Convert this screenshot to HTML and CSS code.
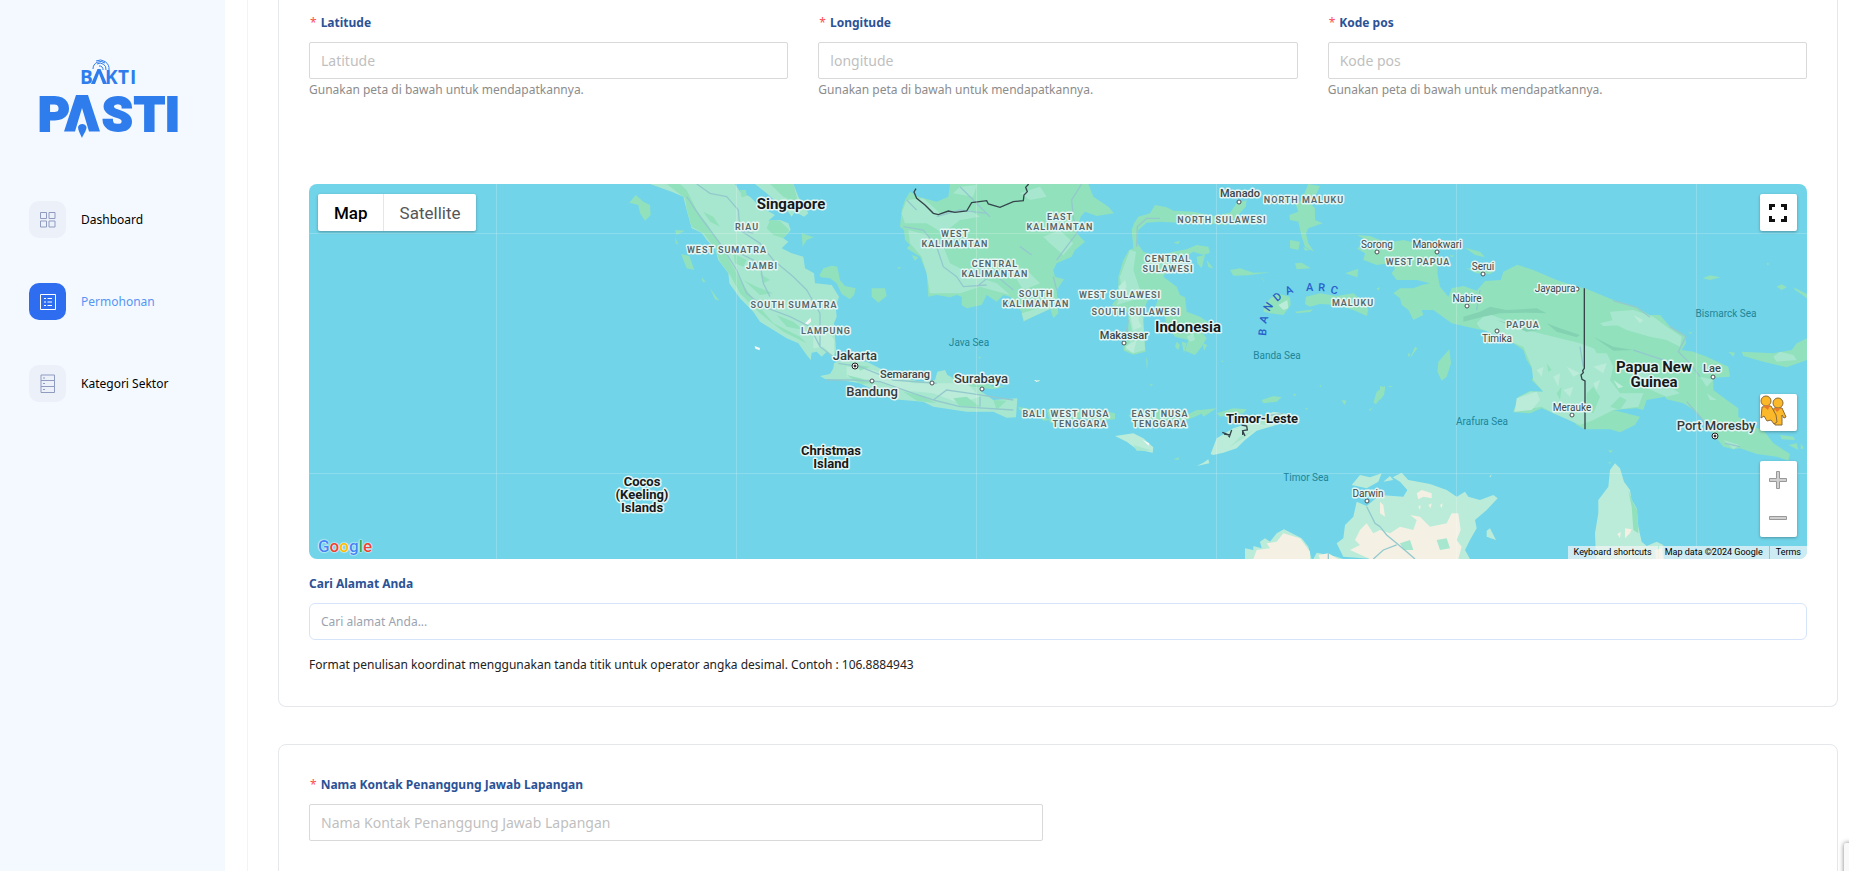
FILE: index.html
```html
<!DOCTYPE html>
<html lang="id">
<head>
<meta charset="utf-8">
<title>BAKTI PASTI - Permohonan</title>
<link rel="stylesheet" href="styles.css">
</head>
<body>
<div class="shell">
  <aside class="sidebar">
    <svg class="logo" viewBox="0 0 140 84" role="img" aria-label="BAKTI PASTI">
      <g class="logo-signal">
        <path d="M54 15a7.500 7.500 0 0 1 12-6"/>
        <path d="M57 7a9 9 0 0 1 13 9"/>
        <path d="M58 10a6 6 0 0 1 9 6"/>
        <path d="M60 12a3.500 3.500 0 0 1 4 4"/>
      </g>
      <text class="logo-small" x="41 66 79 91" y="30">BKTI</text>
      <path class="logo-fill" d="M52 30 58.500 15H61.500L68 30H64L60 19.500 56 30Z"/>
      <text class="logo-big" x="-1 63 95 126" y="77">PSTI</text>
      <path class="logo-fill" d="M25 77.500 37 41H49L61 77.500H50L43 54 36 77.500Z"/>
      <path class="logo-fill" d="M39 73a4.500 4.500 0 0 1 8.500 0c0 4-3 7-4.500 11-1.500-4-4-7-4-11Z"/>
    </svg>
    <nav class="nav">
      <a class="nav-item" href="#dashboard">
        <span class="nav-icon">
          <svg viewBox="0 0 18 18"><path d="M1.500 1.500h6v6h-6zM10 1.500h6v6h-6zM1.500 10h6v6h-6zM10 10h6v6h-6z"/></svg>
        </span>
        Dashboard
      </a>
      <a class="nav-item nav-item-active" href="#permohonan">
        <span class="nav-icon">
          <svg viewBox="0 0 18 18"><path d="M1.500 1.500h15v15h-15z"/><path d="M5 5.500h2M5 9h2M5 12.500h2M8.500 5.500h4.500M8.500 9h4.500M8.500 12.500h4.500"/></svg>
        </span>
        Permohonan
      </a>
      <a class="nav-item" href="#kategori">
        <span class="nav-icon">
          <svg viewBox="0 0 18 20"><path d="M2 1h13.500v17.500H2zM2 6.500h13.500M2 12.500h13.500"/><path d="M4 4h2M4 9.500h2M4 15.500h2"/></svg>
        </span>
        Kategori Sektor
      </a>
    </nav>
  </aside>

  <main class="content">
    <section class="card card-location">
      <div class="fields">
        <div class="field">
          <label class="label required" for="lat">Latitude</label>
          <input class="input" id="lat" type="text" placeholder="Latitude">
          <p class="help">Gunakan peta di bawah untuk mendapatkannya.</p>
        </div>
        <div class="field">
          <label class="label required" for="lng">Longitude</label>
          <input class="input" id="lng" type="text" placeholder="longitude">
          <p class="help">Gunakan peta di bawah untuk mendapatkannya.</p>
        </div>
        <div class="field">
          <label class="label required" for="zip">Kode pos</label>
          <input class="input" id="zip" type="text" placeholder="Kode pos">
          <p class="help">Gunakan peta di bawah untuk mendapatkannya.</p>
        </div>
      </div>

      <div class="map">
        <svg class="map-canvas" viewBox="309 184 1498 375" preserveAspectRatio="xMidYMid slice">
          <!-- Sumatra, Borneo, Java -->
          <g transform="translate(660 180) scale(.33333)">
            <g class="land">
              <path d="M-30 12 35 35 70 50 80 90 95 145 125 158 140 180 165 205 175 240 205 280 208 310 240 355 280 395 300 425 340 450 380 475 415 490 440 525 452 540 455 518 470 515 485 530 500 515 520 535 528 510 522 430 530 410 527 380 537 350 515 315 465 310 462 280 435 265 430 230 395 220 365 205 385 185 370 175 392 150 385 130 360 120 325 122 345 105 300 80 270 50 240 35 225 12Z"/>
              <path class="deep" d="M20 12 75 55 82 95 95 140 130 160 165 205 180 245 210 285 240 340 300 400 370 455 440 490 420 470 340 430 290 370 260 330 230 280 205 235 180 190 140 130 110 90 80 30 60 12Z"/>
              <path class="deep" d="M330 120 360 122 388 150 370 175 340 165 320 145ZM220 220 260 240 250 260 225 250ZM300 280 330 300 310 310ZM130 95 160 110 180 140 150 125ZM250 300 290 320 340 340 300 345ZM350 405 400 425 430 450 380 440Z"/>
              <path class="pale" d="M460 460 500 450 523 480 522 530 490 500 460 505Z"/>
              <path class="white" d="M433 432 452 413 453 425 440 436ZM284 498 300 504 299 511 286 506ZM1122 600 1140 600 1130 606Z"/>
              <path d="M285 12 320 40 360 75 380 90 395 110 405 95 432 110 445 100 415 50 400 12Z"/>
              <path class="deep" d="M330 12 370 50 415 70 400 12Z"/>
              <path class="deep" d="M-73 45-50 65-30 75-28 105-45 122-60 100-65 75-92 68ZM63 222 88 228 103 270 80 265ZM125 292 137 305 128 306ZM150 325 178 362 165 358ZM45 150 75 152 50 165ZM45 170 55 195 47 190ZM240 30 258 30 260 48 245 52ZM425 160 462 172 440 180 428 200ZM635 325 675 325 680 348 655 368 635 350ZM755 225 775 232 765 242ZM712 262 724 262 716 267ZM955 530 965 532 957 536Z"/>
              <path class="deep" d="M478 285 490 265 515 257 532 260 540 300 555 318 587 325 582 345 570 358 545 342 530 310 510 295 482 292Z"/>
              <path class="deep" d="M750 35 775 50 830 65 865 50 870 12 1285 12 1300 50 1345 80 1362 100 1310 108 1275 95 1262 110 1250 160 1275 185 1245 210 1235 230 1190 250 1180 270 1185 290 1212 298 1190 330 1195 400 1180 415 1170 385 1090 425 1085 395 1050 350 1030 345 1010 365 980 345 965 375 920 385 905 375 905 350 890 345 870 352 830 345 805 350 800 280 780 230 740 205 750 195 735 180 732 150 720 140 725 90 735 60Z"/>
              <path d="M740 60 790 55 840 100 930 90 960 110 900 120 850 160 800 130 735 130 725 100ZM745 150 800 165 850 200 870 250 950 290 1010 310 1050 345 960 320 900 340 810 340 800 280 785 230 750 190ZM1080 40 1140 20 1160 50 1110 60ZM1150 170 1200 150 1240 190 1210 225 1170 190ZM1040 250 1100 270 1140 310 1090 330ZM900 20 950 15 940 50 880 40Z"/>
              <path d="M1085 400 1180 372 1175 385 1092 422Z"/>
              <path d="M522 550 545 540 620 545 650 560 700 585 780 605 825 600 832 575 855 570 862 585 890 600 955 605 965 635 1000 660 1072 655 1068 712 1040 713 1000 695 920 695 850 685 820 680 790 665 700 658 600 610 540 600 495 597 480 588 510 582 520 565Z"/>
              <path class="pale" d="M560 560 640 570 690 590 760 610 840 610 920 610 960 650 900 670 820 640 720 630 640 600 560 590Z"/>
              <path class="deep" d="M560 585 600 595 640 610 600 612ZM730 635 790 650 830 670 770 662ZM880 655 920 650 960 680 900 680ZM1000 660 1040 662 1010 690ZM590 555 630 560 600 572ZM870 595 960 600 1000 620 1040 618 1000 628 940 620ZM1075 680 1130 690 1110 700 1078 690ZM1130 700 1170 720 1150 722Z"/>
            </g>
            <path class="river" d="M80 50 120 110 180 190 230 270 260 340 310 380 390 410 450 440 480 500M110 12 150 40 200 50 235 90 240 150 300 190 340 240 400 290 440 330 480 400 480 500 520 530M240 150 280 160M230 215 300 250 310 310 330 350M535 550 600 560 700 600 830 610M500 600 580 600 660 605 760 640 820 660 860 630 930 640 1060 660M820 660 900 680 1060 690M960 650V680M730 140 790 150 830 200 850 260 890 290 910 320 980 315M740 60 770 90M900 20 990 110M1265 12 1235 60 1240 110 1250 160 1190 240M1180 290 1190 330M1080 200 1115 225M830 110 900 90 980 100M950 320 1000 280 1060 330"/>
            <path class="border" d="M768 26 762 36 770 55 795 75 820 100 835 104 865 93 885 97 920 93 935 68 980 62 985 72 1020 82 1060 65 1090 62 1092 45 1102 35 1097 22 1106 12"/>
          </g>
          <!-- Sulawesi, Maluku, Nusa Tenggara, northern Australia -->
          <g transform="translate(1000 180) scale(.33333)">
            <g class="land">
              <path class="deep" d="M415 110 450 100 465 75 500 82 520 92 580 95 640 108 690 98 710 70 740 60 737 80 710 110 680 135 620 130 560 130 480 125 440 128 415 150 412 190 430 215 470 230 520 215 560 208 590 195 625 200 630 218 610 225 580 215 540 240 505 270 490 290 530 320 540 345 555 352 560 395 600 410 645 440 605 455 620 475 605 500 585 525 555 512 565 480 525 470 500 440 495 410 465 385 475 350 450 345 435 380 430 430 437 515 400 524 372 512 368 490 385 480 385 400 350 380 335 375 355 350 355 290 370 240 387 210 400 205 395 150 402 130Z"/>
              <path d="M390 210 408 215 400 270 420 330 400 360 350 375 365 330 360 290 375 250ZM385 400 425 380 430 430 435 510 400 520 375 508 400 470ZM560 470 580 460 585 480 570 485Z"/>
              <path class="pale" d="M390 400 420 390 415 420 425 440 400 450ZM375 500 410 480 400 520ZM355 320 375 300 380 320 362 345Z"/>
              <path class="deep" d="M925 12 960 18 950 40 930 70 945 85 945 120 968 130 925 145 918 160 925 190 942 215 915 200 905 170 895 125 870 120 868 105 895 95 888 75 905 60ZM885 250 905 248 932 265 890 268ZM690 270 720 265 760 278 812 277 745 286 700 287ZM785 290 795 310 788 300ZM870 180 900 185 895 210 870 205ZM910 200 930 210 915 212ZM1035 280 1075 266 1072 292ZM590 230 615 225 605 265 592 250ZM620 240 640 265 625 262ZM520 188 540 182 535 192ZM530 485 540 495 535 510 525 500ZM545 485 560 490 552 520ZM608 490 622 495 612 512ZM438 530 443 545 441 572ZM450 612 460 614 452 618ZM665 540 670 545 665 547Z"/>
              <path class="deep" d="M795 370 812 355 830 340 870 350 872 375 850 405 810 400 790 395ZM918 350 960 340 1010 348 1060 340 1095 370 1105 390 1100 408 1060 390 1010 375 960 372 930 380 915 372ZM885 395 940 388 930 396 890 400ZM1130 325 1140 322 1135 332ZM140 688 230 690 270 685 345 700 345 718 300 722 240 715 150 728ZM385 705 480 688 540 715 590 690 625 690 590 708 560 720 480 722 410 735ZM600 690 650 685 610 710ZM650 700 700 685 740 688 730 700 660 710ZM785 660 820 648 845 652 830 665 790 670ZM880 640 890 645 882 648ZM958 615 965 618 960 622ZM915 685 925 685 920 690ZM1025 660 1040 662 1033 675ZM1105 690 1120 682 1110 692ZM1120 668 1130 635 1155 617 1152 642 1128 672ZM1165 618 1180 618 1170 622ZM520 838 537 832 535 840Z"/>
              <path class="pale" d="M345 768 400 760 430 775 460 802 458 818 410 808 380 785ZM632 822 650 775 700 745 760 725 820 695 862 702 870 715 820 738 770 752 735 780 710 805 670 818 640 825ZM590 858 610 848 625 838 628 850ZM835 375 862 360 865 385 850 390ZM105 600 120 600 115 606Z"/>
              <path d="M400 795 458 812 410 812ZM690 800 730 775 760 750 720 770ZM760 730 830 705 860 705 800 735Z"/>
              <path class="white" d="M428 780 448 790 446 797Z"/>
              <path class="pale" d="M735 1105 760 1110 760 1098 785 1105 780 1085 795 1075 810 1085 830 1060 852 1048 880 1062 905 1075 925 1100 935 1137H735ZM940 1137 950 1118 1010 1130 1030 1137Z"/>
              <path class="sand" d="M760 1137 770 1110 810 1105 800 1090 830 1085 850 1060 900 1075 930 1115 930 1137ZM955 1125 985 1120 1015 1137H960Z"/>
            </g>
            <path class="river" d="M410 200 412 140 440 115 480 115M375 480 385 420M540 240 470 225M780 710 850 700M985 1120V1137"/>
            <path class="border" d="M667 757 682 763 688 770 695 750M692 765 672 762M725 735 740 738 742 750 728 752 735 768M728 752V765"/>
          </g>
          <!-- New Guinea and northern Australia -->
          <g transform="translate(1380 180) scale(.33333)">
            <g class="land">
              <path class="deep" d="M-70 165-30 168 0 180 40 185 70 180 110 190 150 190 175 225 172 280 180 320 205 350 215 325 250 318 290 332 315 303 362 300 370 275 412 254 460 270 530 300 590 320 615 325 700 360 770 380 808 405 840 405 870 440 915 465 918 490 905 510 940 515 980 530 1045 560 1050 590 1000 593 1000 630 1040 660 1075 685 1075 710 1120 740 1150 750 1180 790 1230 822 1225 842 1190 830 1130 822 1080 805 1060 808 1030 800 1010 775 985 740 950 695 910 670 860 658 855 650 800 660 790 690 770 685 700 690 780 710 765 735 720 757 690 748 615 748 590 735 570 710 520 700 485 685 450 700 400 697 415 650 450 633 490 635 455 600 465 580 440 540 430 510 400 490 330 455 260 440 215 430 160 390 125 390 130 405 100 420 85 390 65 375 60 355 40 340 60 325 100 325 125 315 150 310 110 300 50 300 35 280 45 265 30 250-10 255-50 240-45 220-70 205-30 185Z"/>
              <path d="M320 400 400 430 440 450 520 470 600 490 680 520 700 560 690 600 720 640 790 640 775 680 700 690 640 720 600 735 520 700 485 680 400 695 420 650 450 635 490 635 460 600 455 560 430 500 400 488 300 445 290 430ZM690 395 760 390 820 410 860 440 905 470 900 500 860 480 810 470 740 450 700 430ZM660 430 700 420 740 435 670 438ZM1030 780 1080 795 1060 808ZM980 640 1010 660 990 660ZM960 590 1000 600 980 620ZM740 570 800 580 900 640 860 650 790 620Z"/>
              <path class="pale" d="M410 655 470 635 480 660 455 690 405 695ZM470 570 490 560 485 590ZM520 590 540 580 535 620ZM550 630 580 620 570 650ZM560 560 600 580 580 590ZM640 560 680 550 670 580ZM640 610 660 600 650 630ZM760 405 790 420 780 430ZM700 600 730 620 715 625Z"/>
              <path class="deep" d="M620 640 640 620 660 650 640 700 620 690ZM530 640 545 620 540 660ZM500 550 515 570 505 575ZM640 500 700 520 650 520ZM690 680 720 650 740 660 720 690Z"/>
              <path class="ridge" d="M250 410 300 395 330 380 380 390 470 385 500 400 440 398 360 400 310 410 250 425ZM500 430 540 445 600 465 590 472 530 455ZM350 420 420 440 480 450 440 455ZM640 470 700 500 760 510 700 512Z"/>
              <path class="deep" d="M1085 515 1180 520 1235 510 1250 490 1281 475V540L1220 562 1150 545 1090 528ZM968 295 990 286 1022 292 990 300ZM1190 320 1205 313 1220 322 1205 330ZM1240 322 1281 342V355L1245 330ZM1160 248 1170 252 1162 255ZM925 458 938 455 932 462ZM1045 515 1065 518 1060 530ZM1200 765 1240 770 1245 780 1205 778ZM1225 795 1250 790 1255 810ZM1262 790 1272 805 1262 808ZM255 203 300 215 315 232 285 225ZM258 265 345 272 330 282 290 280ZM208 225 225 227 215 232ZM175 545 208 508 213 550 200 590 185 602 172 575ZM105 500 112 505 90 535ZM0 618 15 622 12 645 0 660ZM85 518 92 525 84 530ZM685 810 700 812 690 818ZM685 845 695 848 688 852Z"/>
              <path d="M1180 530 1200 515 1240 525 1250 540 1190 545Z"/>
              <path class="pale" d="M705 850 720 865 732 905 750 930 755 960 770 985 775 1040 785 1085 800 1098 830 1085 850 1095 852 1137H648L645 1060 655 1000 655 960 685 920 690 870Z"/>
              <path class="deep" d="M745 930 760 970 772 990 775 1060 760 1050 755 980Z"/>
              <path class="sand" d="M735 1045 755 1048 750 1060 735 1075ZM712 1062 722 1055 720 1075ZM825 1110 845 1105 850 1137H828Z"/>
              <path class="pale" d="M-130 1090-110 1075-105 1035-80 1010-70 965-40 978 0 945 70 950 82 930 60 905 38 892 65 878 85 900 150 912 200 930 230 950 255 935 265 950 300 960 340 945 353 955 320 990 285 1020 290 1045 270 1080 255 1110 270 1137H-20L-110 1130ZM-85 915-60 885-30 892 5 880-5 905-40 925ZM30 888 10 905 40 900ZM320 1052 330 1045 348 1080 320 1070ZM328 890 335 882 332 892Z"/>
              <path class="sand" d="M-60 1050-40 1030-20 1060 0 1050 30 1060 60 1040 100 1050 110 1020 90 1005 120 1010 150 1040 200 1030 215 1000 235 1000 242 1050 230 1080 245 1100 235 1137H-30L-90 1110-60 1095-75 1080ZM110 940 125 930 155 940 155 955 130 950 115 958ZM145 975 155 970 152 985ZM0 965 10 975 15 1010 0 1000ZM180 975 188 970 185 985ZM115 980 122 975 120 990Z"/>
              <path d="M170 1080 200 1075 210 1105 180 1110ZM60 1090 90 1080 100 1110 70 1110Z"/>
            </g>
            <path class="river" d="M700 362 770 382 810 412M870 440 918 470 895 515 930 550 960 590M760 510 790 520 850 540 900 560M920 665 960 710 985 740M300 330 290 390M0 1040 20 1065 50 1090 80 1115 105 1137M-20 1137 10 1110 50 1095M-40 980-15 1030 0 1040M1035 790 1080 800M610 560 600 500"/>
            <path class="border" d="M613 325V565L608 572 610 578 603 585 606 598 615 603V748"/>
          </g>
          <g class="grid"><path d="M496.500 184v375M736.500 184v375M976.500 184v375M1216.500 184v375M1456.500 184v375M1696.500 184v375M309 233.500h1498M309 473.500h1498"/></g>
          <g class="marker">
            <circle cx="872" cy="381" r="2"/><circle cx="932" cy="383" r="2"/><circle cx="982" cy="389" r="2"/><circle cx="1239" cy="202" r="2"/><circle cx="1124" cy="343" r="2"/><circle cx="1377" cy="252" r="2"/><circle cx="1437" cy="252" r="2"/><circle cx="1483" cy="274" r="2"/><circle cx="1467" cy="306" r="2"/><circle cx="1497" cy="331" r="2"/><circle cx="1577" cy="289" r="2"/><circle cx="1572" cy="415" r="2"/><circle cx="1713" cy="377" r="2"/><circle cx="1367" cy="501" r="2"/>
            <circle class="capital" cx="855" cy="366" r="3"/><circle class="dot" cx="855" cy="366" r="1"/>
            <circle class="capital" cx="1715" cy="436" r="3"/><circle class="dot" cx="1715" cy="436" r="1"/>
          </g>
          <g class="t-region">
            <text x="747" y="230">RIAU</text><text x="727" y="253">WEST SUMATRA</text><text x="762" y="269">JAMBI</text><text x="794" y="308">SOUTH SUMATRA</text><text x="826" y="334">LAMPUNG</text>
            <text x="955" y="237">WEST</text><text x="955" y="247">KALIMANTAN</text><text x="1060" y="220">EAST</text><text x="1060" y="230">KALIMANTAN</text>
            <text x="995" y="267">CENTRAL</text><text x="995" y="277">KALIMANTAN</text><text x="1036" y="297">SOUTH</text><text x="1036" y="307">KALIMANTAN</text>
            <text x="1222" y="223">NORTH SULAWESI</text><text x="1304" y="203">NORTH MALUKU</text><text x="1168" y="262">CENTRAL</text><text x="1168" y="272">SULAWESI</text><text x="1120" y="298">WEST SULAWESI</text><text x="1136" y="315">SOUTH SULAWESI</text>
            <text x="1353" y="306">MALUKU</text><text x="1034" y="417">BALI</text><text x="1080" y="417">WEST NUSA</text><text x="1080" y="427">TENGGARA</text><text x="1160" y="417">EAST NUSA</text><text x="1160" y="427">TENGGARA</text>
            <text x="1418" y="265">WEST PAPUA</text><text x="1523" y="328">PAPUA</text>
          </g>
          <g class="t-sea">
            <text x="969" y="346">Java Sea</text><text x="1277" y="359">Banda Sea</text><text x="1306" y="481">Timor Sea</text><text x="1482" y="425">Arafura Sea</text><text x="1726" y="317">Bismarck Sea</text>
          </g>
          <text class="t-arc" x="1266 1266 1269 1277 1287 1306 1318 1330" y="336 324 312 302 295 291 291 293" rotate="-85 -70 -55 -40 -22 0 3 12">BANDAARC</text>
          <g class="t-town">
            <text x="1377" y="248">Sorong</text><text x="1437" y="248">Manokwari</text><text x="1483" y="270">Serui</text><text x="1467" y="302">Nabire</text><text x="1497" y="342">Timika</text><text x="1555" y="292">Jayapura</text><text x="1572" y="411">Merauke</text><text x="1368" y="497">Darwin</text>
          </g>
          <g class="t-city">
            <text x="905" y="378">Semarang</text><text x="1240" y="197">Manado</text><text x="1124" y="339">Makassar</text><text x="1712" y="372">Lae</text>
          </g>
          <g class="t-metro">
            <text x="855" y="360">Jakarta</text><text x="872" y="396">Bandung</text><text x="981" y="383">Surabaya</text><text x="1716" y="430">Port Moresby</text>
          </g>
          <g class="t-country">
            <text x="791" y="209">Singapore</text><text x="1188" y="332">Indonesia</text><text x="1654" y="372">Papua New</text><text x="1654" y="387">Guinea</text>
          </g>
          <g class="t-isle">
            <text x="1262" y="423">Timor-Leste</text><text x="831" y="455">Christmas</text><text x="831" y="468">Island</text><text x="642" y="486">Cocos</text><text x="642" y="499">(Keeling)</text><text x="642" y="512">Islands</text>
          </g>
        </svg>
        <div class="map-type">
          <button class="type-button type-active" type="button">Map</button>
          <button class="type-button" type="button">Satellite</button>
        </div>
        <button class="map-button fullscreen" type="button" aria-label="Toggle fullscreen view">
          <svg width="18" height="18" viewBox="0 0 18 18"><path fill="#111" d="M0 0v6h3V3h3V0zM15 0h-3v3h3v3h3V0zM15 15h-3v3h6v-6h-3zM3 12H0v6h6v-3H3z"/></svg>
        </button>
        <button class="map-button pegman" type="button" aria-label="Street View Pegman">
          <svg width="37" height="37" viewBox="0 0 37 37">
            <g fill="#fbb829" stroke="#8a6a36"><path d="M14 14h8l4 9-2 1-2-3v10h-7l-2-8z"/><circle cx="18" cy="9" r="5"/><path d="M2 13l9-1 5 9 1 7-3 2-3-4-4 1-3-5-3 2z"/><circle cx="6" cy="7" r="5"/></g>
            <path fill="#e8792b" d="M3 12l7-1-2 5zM14 14h7l-4 4z"/>
          </svg>
        </button>
        <div class="zoom">
          <button class="zoom-button" type="button" aria-label="Zoom in"><svg width="18" height="18" viewBox="0 0 18 18"><path d="M7.500.500h3v7h7v3h-7v7h-3v-7h-7v-3h7z"/></svg></button>
          <button class="zoom-button" type="button" aria-label="Zoom out"><svg width="18" height="18" viewBox="0 0 18 18"><path d="M.500 7.500h17v3H.500z"/></svg></button>
        </div>
        <div class="brand"><span class="g-blue">G</span><span class="g-red">o</span><span class="g-yellow">o</span><span class="g-blue">g</span><span class="g-green">l</span><span class="g-red">e</span></div>
        <div class="credits">
          <button class="credit" type="button">Keyboard shortcuts</button>
          <span class="credit">Map data ©2024 Google</span>
          <a class="credit" href="#terms">Terms</a>
        </div>
      </div>

      <div class="field field-search">
        <label class="label" for="search">Cari Alamat Anda</label>
        <input class="input input-search" id="search" type="text" placeholder="Cari alamat Anda...">
      </div>
      <p class="note">Format penulisan koordinat menggunakan tanda titik untuk operator angka desimal. Contoh : 106.8884943</p>
    </section>

    <section class="card card-contact">
      <div class="contact-fields">
        <div class="field">
          <label class="label required" for="contact">Nama Kontak Penanggung Jawab Lapangan</label>
          <input class="input" id="contact" type="text" placeholder="Nama Kontak Penanggung Jawab Lapangan">
        </div>
      </div>
    </section>
  </main>
</div>
<div class="corner-badge"></div>
</body>
</html>
```
FILE: styles.css
```css
* { box-sizing: border-box; }

body {
  margin: 0;
  background: #fff;
  color: #222;
  font: 12px/22px "Noto Sans", "Open Sans", sans-serif;
}

p { margin: 0; }
button, input { font: inherit; }

.shell {
  display: flex;
  height: 100vh;
  overflow: hidden;
}

/* Sidebar */
.sidebar {
  flex: 0 0 225px;
  padding: 54px 29px 0;
  background: #f4f9ff;
}

.logo {
  display: block;
  width: 140px;
  height: 84px;
  margin-left: 10px;
  overflow: visible;
}

.logo-fill { fill: #2f7ded; }
.logo-signal path { fill: none; stroke: #2f7ded; }
.logo-small { font: 700 19px "Open Sans", sans-serif; fill: #2f7ded; }

.logo-big {
  font: 900 49px Roboto, sans-serif;
  fill: #2f7ded;
  stroke: #2f7ded;
  stroke-width: 2px;
}

.nav {
  display: flex;
  flex-direction: column;
  gap: 45px;
  margin-top: 63px;
}

.nav-item {
  display: flex;
  align-items: center;
  gap: 15px;
  color: #000;
  text-decoration: none;
}

.nav-icon {
  display: grid;
  place-items: center;
  width: 37px;
  height: 37px;
  border-radius: 10px;
  background: #ebf0f9;
}

.nav-icon svg {
  width: 18px;
  height: 20px;
  fill: none;
  stroke: #8f9bbf;
  stroke-width: 1px;
}

.nav-item-active { color: #5596f5; }
.nav-item-active .nav-icon { background: #2f6df0; }
.nav-item-active .nav-icon svg { stroke: #fff; }

/* Content */
.content {
  flex: 1;
  min-width: 0;
  margin-left: 22px;
  padding: 0 11px 0 30px;
  border-left: 1px solid #f3f3f4;
}

.card {
  padding: 29px 30px;
  border: 1px solid #e5e7eb;
  border-radius: 8px;
}

.card-location {
  padding-top: 12px;
  border-top: 0;
  border-radius: 0 0 8px 8px;
}

.card-contact {
  min-height: 300px;
  margin-top: 37px;
}

.fields {
  display: grid;
  grid-template-columns: repeat(3, 1fr);
  gap: 30px;
}

.contact-fields {
  display: grid;
  grid-template-columns: repeat(2, 1fr);
  gap: 30px;
}

.field { display: flex; flex-direction: column; }

.label {
  margin-bottom: 8px;
  color: #2b5296;
  font-weight: 700;
}

.required::before {
  content: "*";
  margin: 0 4px 0 1px;
  color: #ff4d4f;
  font-weight: 400;
}

.input {
  width: 100%;
  height: 37px;
  padding: 0 11px;
  border: 1px solid #d9d9d9;
  border-radius: 2px;
  background: #fff;
  font-size: 14px;
}

.input::placeholder { color: #bfbfbf; opacity: 1; }

.input-search {
  border-color: #d6e4fb;
  border-radius: 6px;
  font-size: 12px;
}

.input-search::placeholder { color: #9ca3af; }

.help { color: #8c8c8c; }
.field-search { margin-top: 14px; }
.note { margin: 14px 0 1px; }

/* Map */
.map {
  position: relative;
  height: 375px;
  margin-top: 83px;
  overflow: hidden;
  border-radius: 8px;
  background: #71d4e9;
  font-family: Roboto, sans-serif;
}

.map-canvas { display: block; width: 100%; height: 100%; }
.land path { fill: #a8e7cf; }
.land .deep { fill: #91e1bd; }
.land .pale { fill: #bbecd9; }
.land .sand { fill: #f4f0e4; }
.land .white { fill: #f3f8f6; }
.land .ridge { fill: #83d3b3; }
.river { fill: none; stroke: #93c9cd; stroke-width: 4px; }
.border { fill: none; stroke: #34454a; stroke-width: 4px; }
.grid { stroke: #fff; stroke-opacity: .2; }
.marker { fill: #fff; stroke: #4a4f55; }
.marker .capital { stroke: #222; }
.marker .dot { fill: #222; stroke: #222; }

.map-canvas text {
  font-family: Roboto, sans-serif;
  text-anchor: middle;
  paint-order: stroke;
  stroke: #e3f6f3;
  stroke-width: 3px;
  stroke-linejoin: round;
}

.t-region text { font-size: 9px; font-weight: 600; letter-spacing: 1px; fill: #54666b; }
.map-canvas .t-sea text { font-size: 10px; fill: #208598; stroke: none; }
.map-canvas .t-arc { font-size: 11px; font-weight: 500; fill: #2a5fc9; stroke: none; text-anchor: start; }
.t-town text { font-size: 10px; fill: #3b464b; }
.t-city text { font-size: 11px; font-weight: 500; fill: #3b464b; }
.t-metro text { font-size: 13px; font-weight: 500; fill: #333b40; }
.t-country text { font-size: 15px; font-weight: 700; fill: #16191c; }
.t-isle text { font-size: 13px; font-weight: 700; fill: #16191c; }

.map-type {
  position: absolute;
  top: 10px;
  left: 9px;
  display: flex;
  height: 37px;
  border-radius: 2px;
  background: #fff;
  box-shadow: 0 1px 3px rgba(0, 0, 0, .3);
}

.type-button {
  padding: 0 15px 0 16px;
  border: 0;
  background: none;
  color: #565656;
  font-size: 17px;
}

.type-button + .type-button { border-left: 1px solid #e6e6e6; }
.map .type-active { color: #000; font-weight: 500; }

.map-button, .zoom {
  position: absolute;
  right: 10px;
  width: 37px;
  border: 0;
  border-radius: 2px;
  background: #fff;
  box-shadow: 0 1px 3px rgba(0, 0, 0, .3);
}

.map-button {
  display: grid;
  place-items: center;
  height: 37px;
  padding: 0;
}

.fullscreen { top: 10px; padding-right: 1px; }
.pegman { bottom: 128px; }
.zoom { bottom: 22px; }

.zoom-button {
  display: grid;
  place-items: center;
  width: 37px;
  height: 38px;
  padding: 0 1px 0 0;
  border: 0;
  background: none;
}

.zoom-button path { fill: #d0d0d0; stroke: #999; }

.brand {
  position: absolute;
  bottom: 2px;
  left: 9px;
  font-size: 17px;
  font-weight: 500;
  text-shadow: 0 0 1px #fff, 0 0 1px #fff, 0 0 2px #fff;
}

.g-blue { color: #4285f4; }
.g-red { color: #ea4335; }
.g-yellow { color: #fbbc05; }
.g-green { color: #34a853; }

.credits {
  position: absolute;
  right: 0;
  bottom: 0;
  display: flex;
  gap: 1px;
}

.credit {
  padding: 0 6px;
  border: 0;
  background: rgba(245, 245, 245, .7);
  color: #000;
  font-size: 9px;
  line-height: 13px;
  text-decoration: none;
}

.corner-badge {
  position: fixed;
  right: -65px;
  bottom: -32px;
  width: 70px;
  height: 60px;
  border-radius: 2px;
  background: #f9f9f9;
  box-shadow: 0 0 5px #808080;
}
```
